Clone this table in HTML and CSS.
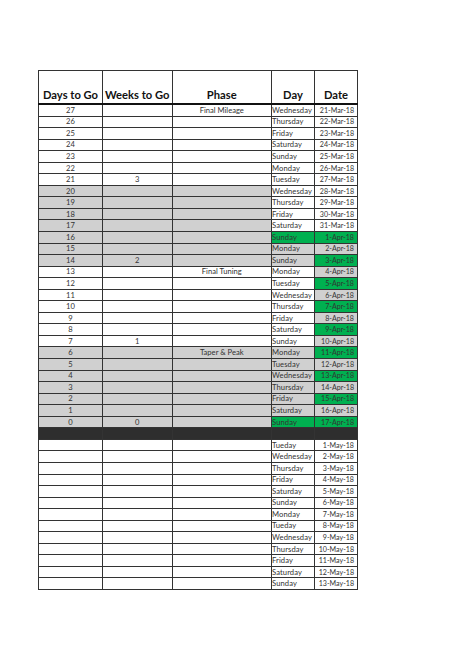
FILE: index.html
```html
<!DOCTYPE html>
<html>
<head>
<meta charset="utf-8">
<link rel="stylesheet" href="styles.css">
</head>
<body>
<div class="sheet">
<table class="plan">
<colgroup>
<col class="c-days"><col class="c-weeks"><col class="c-phase"><col class="c-day"><col class="c-date">
</colgroup>
<thead>
<tr class="head"><th>Days to Go</th><th>Weeks to Go</th><th>Phase</th><th>Day</th><th>Date</th></tr>
</thead>
<tbody>
<tr><td class="n">27</td><td></td><td class="ph">Final Mileage</td><td class="d">Wednesday</td><td class="dt">21-Mar-18</td></tr>
<tr><td class="n">26</td><td></td><td></td><td class="d">Thursday</td><td class="dt">22-Mar-18</td></tr>
<tr><td class="n">25</td><td></td><td></td><td class="d">Friday</td><td class="dt">23-Mar-18</td></tr>
<tr><td class="n">24</td><td></td><td></td><td class="d">Saturday</td><td class="dt">24-Mar-18</td></tr>
<tr><td class="n">23</td><td></td><td></td><td class="d">Sunday</td><td class="dt">25-Mar-18</td></tr>
<tr><td class="n">22</td><td></td><td></td><td class="d">Monday</td><td class="dt">26-Mar-18</td></tr>
<tr><td class="n">21</td><td class="n">3</td><td></td><td class="d">Tuesday</td><td class="dt">27-Mar-18</td></tr>
<tr class="g"><td class="n">20</td><td></td><td></td><td class="d w">Wednesday</td><td class="dt w">28-Mar-18</td></tr>
<tr class="g"><td class="n">19</td><td></td><td></td><td class="d w">Thursday</td><td class="dt w">29-Mar-18</td></tr>
<tr class="g"><td class="n">18</td><td></td><td></td><td class="d w">Friday</td><td class="dt w">30-Mar-18</td></tr>
<tr class="g"><td class="n">17</td><td></td><td></td><td class="d w">Saturday</td><td class="dt w">31-Mar-18</td></tr>
<tr class="g"><td class="n">16</td><td></td><td></td><td class="d gr">Sunday</td><td class="dt gr">1-Apr-18</td></tr>
<tr class="g"><td class="n">15</td><td></td><td></td><td class="d">Monday</td><td class="dt">2-Apr-18</td></tr>
<tr class="g"><td class="n">14</td><td class="n">2</td><td></td><td class="d">Sunday</td><td class="dt gr">3-Apr-18</td></tr>
<tr><td class="n">13</td><td></td><td class="ph">Final Tuning</td><td class="d">Monday</td><td class="dt gy">4-Apr-18</td></tr>
<tr><td class="n">12</td><td></td><td></td><td class="d">Tuesday</td><td class="dt gr">5-Apr-18</td></tr>
<tr><td class="n">11</td><td></td><td></td><td class="d">Wednesday</td><td class="dt gy">6-Apr-18</td></tr>
<tr><td class="n">10</td><td></td><td></td><td class="d">Thursday</td><td class="dt gr">7-Apr-18</td></tr>
<tr><td class="n">9</td><td></td><td></td><td class="d">Friday</td><td class="dt gy">8-Apr-18</td></tr>
<tr><td class="n">8</td><td></td><td></td><td class="d">Saturday</td><td class="dt gr">9-Apr-18</td></tr>
<tr><td class="n">7</td><td class="n">1</td><td></td><td class="d">Sunday</td><td class="dt gy">10-Apr-18</td></tr>
<tr class="g"><td class="n">6</td><td></td><td class="ph">Taper &amp; Peak</td><td class="d">Monday</td><td class="dt gr">11-Apr-18</td></tr>
<tr class="g"><td class="n">5</td><td></td><td></td><td class="d">Tuesday</td><td class="dt">12-Apr-18</td></tr>
<tr class="g"><td class="n">4</td><td></td><td></td><td class="d">Wednesday</td><td class="dt gr">13-Apr-18</td></tr>
<tr class="g"><td class="n">3</td><td></td><td></td><td class="d">Thursday</td><td class="dt">14-Apr-18</td></tr>
<tr class="g"><td class="n">2</td><td></td><td></td><td class="d">Friday</td><td class="dt gr">15-Apr-18</td></tr>
<tr class="g"><td class="n">1</td><td></td><td></td><td class="d">Saturday</td><td class="dt">16-Apr-18</td></tr>
<tr class="g"><td class="n">0</td><td class="n">0</td><td></td><td class="d gr">Sunday</td><td class="dt gr">17-Apr-18</td></tr>
<tr class="dark"><td></td><td></td><td></td><td></td><td></td></tr>
<tr><td></td><td></td><td></td><td class="d">Tueday</td><td class="dt">1-May-18</td></tr>
<tr><td></td><td></td><td></td><td class="d">Wednesday</td><td class="dt">2-May-18</td></tr>
<tr><td></td><td></td><td></td><td class="d">Thursday</td><td class="dt">3-May-18</td></tr>
<tr><td></td><td></td><td></td><td class="d">Friday</td><td class="dt">4-May-18</td></tr>
<tr><td></td><td></td><td></td><td class="d">Saturday</td><td class="dt">5-May-18</td></tr>
<tr><td></td><td></td><td></td><td class="d">Sunday</td><td class="dt">6-May-18</td></tr>
<tr><td></td><td></td><td></td><td class="d">Monday</td><td class="dt">7-May-18</td></tr>
<tr><td></td><td></td><td></td><td class="d">Tueday</td><td class="dt">8-May-18</td></tr>
<tr><td></td><td></td><td></td><td class="d">Wednesday</td><td class="dt">9-May-18</td></tr>
<tr><td></td><td></td><td></td><td class="d">Thursday</td><td class="dt">10-May-18</td></tr>
<tr><td></td><td></td><td></td><td class="d">Friday</td><td class="dt">11-May-18</td></tr>
<tr><td></td><td></td><td></td><td class="d">Saturday</td><td class="dt">12-May-18</td></tr>
<tr><td></td><td></td><td></td><td class="d">Sunday</td><td class="dt">13-May-18</td></tr>
</tbody>
</table>
</div>
</body>
</html>
```

FILE: styles.css
```css
html, body {
  margin: 0;
  padding: 0;
  background: #ffffff;
}

.sheet {
  padding: 70px 0 0 38px;
}

.plan {
  border-collapse: collapse;
  table-layout: fixed;
  width: 319px;
  font-family: "Lato", "Liberation Sans", sans-serif;
  color: #333333;
}

.c-days { width: 64px; }
.c-weeks { width: 69.5px; }
.c-phase { width: 99.5px; }
.c-day { width: 43px; }
.c-date { width: 43px; }

.plan th,
.plan td {
  border: 1px solid #333333;
  padding: 0;
  overflow: hidden;
  white-space: nowrap;
}

.head th {
  height: 30px;
  vertical-align: bottom;
  font-size: 11.2px;
  font-weight: 700;
  line-height: 13px;
  color: #111111;
  padding-bottom: 2px;
  border-bottom: 2px solid #111111;
}

.plan tbody tr {
  height: 11.55px;
}

.plan td {
  font-size: 7.6px;
  line-height: 9px;
  height: 10.55px;
}

.n, .ph { text-align: center; }

.ph { font-size: 8px; }

.d {
  text-align: left;
  padding-left: 1px;
  letter-spacing: 0.1px;
}

.plan td.dt {
  text-align: right;
  padding-right: 3px;
  font-size: 7.1px;
}

.g td { background: #d0d0d0; }
.g td.w { background: #ffffff; }
td.gy { background: #d0d0d0; }
td.gr, .g td.gr { background: #00b050; }

.dark td { background: #2e2e2e; }
```
